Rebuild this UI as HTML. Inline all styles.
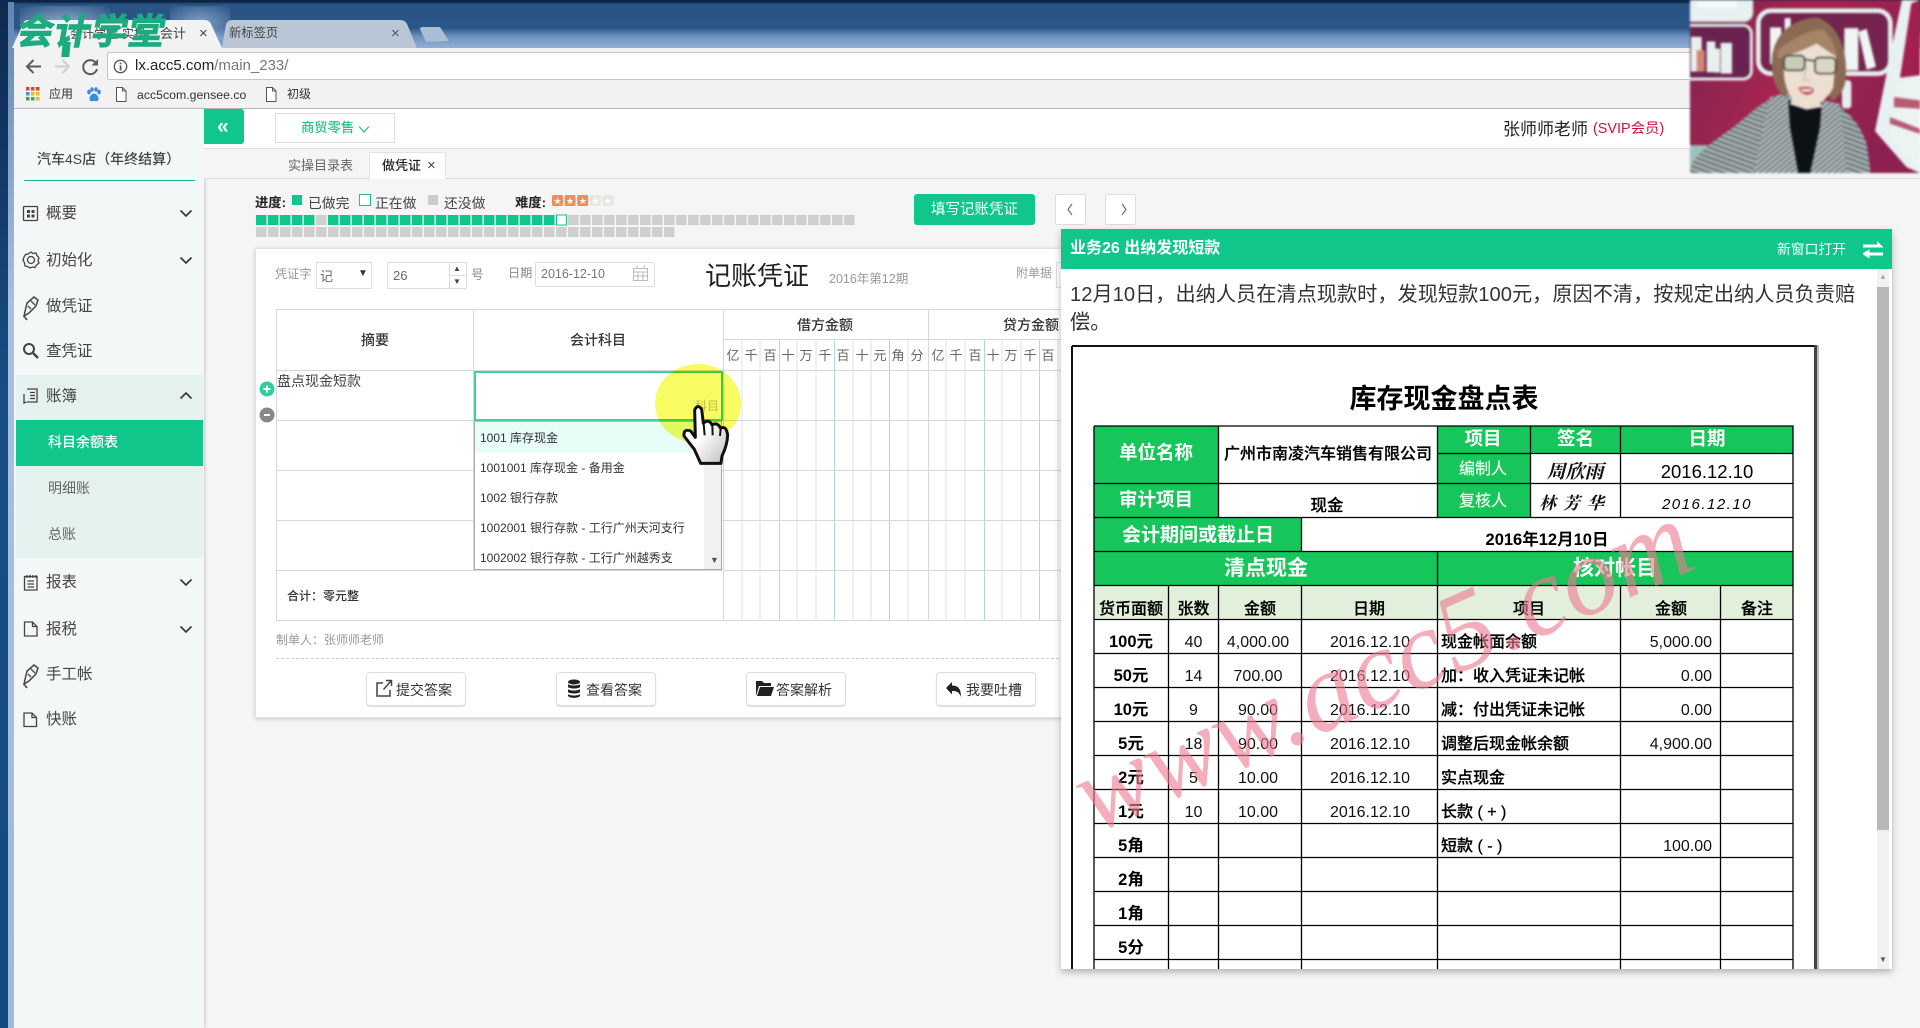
<!DOCTYPE html>
<html lang="zh"><head><meta charset="utf-8"><title>记账凭证</title>
<style>
html,body{margin:0;padding:0;width:1920px;height:1028px;overflow:hidden;background:#f5f5f5}
body{position:relative;font-family:"Liberation Sans","Noto Sans CJK SC",sans-serif;color:#333}
.a{position:absolute}
.t{position:absolute;white-space:nowrap;line-height:1}
.sq{position:absolute;width:10px;height:10px}
svg{position:absolute;overflow:visible}
.btn{position:absolute;top:672px;height:32px;width:98px;border:1px solid #ddd;border-radius:4px;background:#fff;box-shadow:0 1px 1px #ddd;font-size:14px;line-height:34px;text-align:right;color:#333}
.btn span{position:absolute;left:29px;top:0}
.dig{position:absolute;top:349px;font-size:13px;line-height:14px;color:#666;width:18px;text-align:center}
.itm{position:absolute;left:480px;font-size:12px;line-height:14px;color:#333;white-space:nowrap}
.nav{position:absolute;left:46px;font-size:15.5px;line-height:18px;color:#444;white-space:nowrap}
.sub{position:absolute;left:48px;font-size:14px;line-height:16px;color:#666;white-space:nowrap}
</style></head><body>

<!-- window chrome -->
<div class="a" style="left:0;top:0;width:1920px;height:48px;background:linear-gradient(#0c2547 0,#0c2547 2px,#2a5385 4px,#2c5688 28px,#6b90bd 36px,#8eaed6 47px)"></div>
<div class="a" style="left:0;top:0;width:8px;height:1028px;background:linear-gradient(#0f2a50,#1a4f86 40%,#15497f)"></div>
<div class="a" style="left:8px;top:2px;width:6px;height:1026px;background:linear-gradient(#5f86b5,#a5bfe2 30%,#9db9de)"></div>
<div class="a" style="left:20px;top:6px;width:90px;height:40px;background:radial-gradient(ellipse at center,#bcd0e4,rgba(188,208,228,0));opacity:.75"></div>
<div class="a" style="left:170px;top:6px;width:60px;height:35px;background:radial-gradient(ellipse at center,#a9c4df,rgba(169,196,223,0));opacity:.7"></div>

<!-- tabs -->
<svg style="left:0;top:0" width="460" height="50"><path d="M12 48 L24 22 Q25 20 28 20 L205 20 Q209 20 211 24 L222 48 Z" fill="#f2f2f2"/><path d="M222 48 L226 24 Q228 20 232 20 L400 20 Q405 20 407 24 L417 48 Z" fill="#b9c6d6"/><path d="M420 29 Q420 27 423 27 L440 27 L449 41 L426 42 Z" fill="#a9bdd5"/></svg>
<div class="t" style="left:160px;top:27px;font-size:13px;color:#444">会计</div>
<div class="t" style="left:70px;top:28px;font-size:12px;color:#444">会计学堂-实操</div>
<div class="t" style="left:199px;top:26px;font-size:15px;color:#444">×</div>
<div class="t" style="left:229px;top:27px;font-size:12.3px;color:#444">新标签页</div>
<div class="t" style="left:391px;top:26px;font-size:15px;color:#555">×</div>

<!-- toolbar -->
<div class="a" style="left:14px;top:48px;width:1906px;height:60px;background:#f2f2f2;border-bottom:1px solid #b5b5b5"></div>
<div class="a" style="left:107px;top:52px;width:1813px;height:26px;background:#fff;border:1px solid #c4c4c4;border-radius:2px 0 0 2px"></div>
<svg style="left:24px;top:56px" width="80" height="22" fill="none"><path d="M17 10.500H3M9.500 4L3 10.500 9.500 17" stroke="#5c5c5c" stroke-width="2"/><path d="M31 10.500H45M38.500 4L45 10.500 38.500 17" stroke="#cfcfcf" stroke-width="2"/><path d="M72.500 8A7 7 0 1 0 73 13" stroke="#5c5c5c" stroke-width="2"/><path d="M74 3V9.500H67.500Z" fill="#5c5c5c"/></svg>
<svg style="left:113px;top:59px" width="15" height="15"><circle cx="7.500" cy="7.500" r="6.200" fill="none" stroke="#555" stroke-width="1.300"/><rect x="6.700" y="6.500" width="1.700" height="5" fill="#555"/><rect x="6.700" y="3.600" width="1.700" height="1.700" fill="#555"/></svg>
<div class="t" style="left:135px;top:58px;font-size:15px;color:#222">lx.acc5.com<span style="color:#777">/main_233/</span></div>
<svg style="left:26px;top:87px" width="14" height="16"><g><rect x="0" y="0" width="3.500" height="3.500" fill="#d9413a"/><rect x="5" y="0" width="3.500" height="3.500" fill="#d9413a"/><rect x="10" y="0" width="3.500" height="3.500" fill="#d9413a"/><rect x="0" y="5" width="3.500" height="3.500" fill="#4a8fe0"/><rect x="5" y="5" width="3.500" height="3.500" fill="#e9b530"/><rect x="10" y="5" width="3.500" height="3.500" fill="#e9b530"/><rect x="0" y="10" width="3.500" height="3.500" fill="#43a55a"/><rect x="5" y="10" width="3.500" height="3.500" fill="#43a55a"/><rect x="10" y="10" width="3.500" height="3.500" fill="#e9b530"/></g></svg>
<div class="t" style="left:49px;top:88px;font-size:12px;color:#333">应用</div>
<svg style="left:86px;top:87px" width="15" height="16" fill="#3f88e5"><ellipse cx="3" cy="5" rx="1.800" ry="2.400"/><ellipse cx="6" cy="2.500" rx="1.700" ry="2.300"/><ellipse cx="10" cy="2.500" rx="1.700" ry="2.300"/><ellipse cx="13" cy="5" rx="1.800" ry="2.400"/><path d="M8 6.500C5.500 6.500 3 10 3.500 12.500 4 15 7 14 8 14S12 15 12.500 12.500C13 10 10.500 6.500 8 6.500Z"/></svg>
<svg style="left:116px;top:87px" width="11" height="16" fill="#fff" stroke="#555"><path d="M.5.500H6.500L10 4V14.500H.5Z"/><path d="M6.500.500V4H10" fill="none"/></svg>
<div class="t" style="left:137px;top:89px;font-size:12.300px;color:#333">acc5com.gensee.co</div>
<svg style="left:266px;top:87px" width="11" height="16" fill="#fff" stroke="#555"><path d="M.5.500H6.500L10 4V14.500H.5Z"/><path d="M6.500.500V4H10" fill="none"/></svg>
<div class="t" style="left:287px;top:88px;font-size:12px;color:#333">初级</div>

<!-- logo -->
<div class="t" style="left:18px;top:14px;font-size:36px;font-weight:700;color:#1cab80;transform:skewX(-10deg);-webkit-text-stroke:1px #1cab80;letter-spacing:1px">会计学堂</div>
<div class="a" style="left:62px;top:42px;width:8px;height:15px;background:#1cab80;transform:skewX(-6deg)"></div>

<!-- sidebar -->
<div class="a" style="left:14px;top:109px;width:190px;height:919px;background:#f3f7f8;box-shadow:1px 0 3px #c6c6c6"></div>
<div class="t" style="left:37px;top:152px;font-size:14px;font-weight:500;color:#444">汽车4S店（年终结算）</div>
<div class="a" style="left:24px;top:180px;width:171px;height:1px;background:#14b98a"></div>
<div class="a" style="left:16px;top:375px;width:187px;height:183px;background:#e4f1ef"></div>
<div class="a" style="left:16px;top:420px;width:187px;height:46px;background:#10c68a"></div>
<div class="nav" style="top:205px">概要</div>
<div class="nav" style="top:252px">初始化</div>
<div class="nav" style="top:298px">做凭证</div>
<div class="nav" style="top:343px">查凭证</div>
<div class="nav" style="top:388px">账簿</div>
<div class="sub" style="top:434px;color:#fff;font-weight:500">科目余额表</div>
<div class="sub" style="top:480px">明细账</div>
<div class="sub" style="top:526px">总账</div>
<div class="nav" style="top:574px">报表</div>
<div class="nav" style="top:621px">报税</div>
<div class="nav" style="top:666px">手工帐</div>
<div class="nav" style="top:711px">快账</div>
<svg style="left:0;top:0" width="204" height="760" fill="none" stroke="#444" stroke-width="1.300">
<rect x="23.500" y="206.500" width="14" height="14" rx="1"/><g fill="#444" stroke="none"><rect x="27" y="210" width="3" height="3"/><rect x="31.500" y="210" width="3" height="3"/><rect x="27" y="214.500" width="3" height="3"/><rect x="31.500" y="214.500" width="3" height="3"/></g>
<circle cx="31" cy="260" r="3.500"/><path d="M31 252L33 253.500 36 253 37 255.500 39 258 38 260.500 39 263 36.500 265 35 267.500 32.500 267 30 268 27.500 266.500 25 266 24.500 263 23 260 24 257 25.500 254.500 28 254Z"/>
<path d="M24 316L27 303 34 297 38 300 36 306 29 313ZM24 316L27 320" stroke-width="1.500"/><path d="M31 301L35 305M28 306L31 309"/>
<circle cx="29" cy="349" r="5" stroke-width="2"/><path d="M33 353L38 358" stroke-width="2.500"/>
<path d="M27 389H37V402H27M30 392.500H35M30 395.500H35M30 398.500H35M24 394V403L26.500 402"/>
<path d="M24.500 576.500H37V590H24.500ZM27 575V578M30 575V578M33 575V578M36 575V578M27.500 581H34M27.500 584H34M27.500 587H34"/>
<path d="M24.500 622H32.500L37 626.500V636H24.500Z"/><path d="M32.500 622V626.500H37"/>
<path d="M24 684L27 671 34 665 38 668 36 674 29 681ZM24 684L27 688" stroke-width="1.500"/><path d="M31 669L35 673M28 674L31 677"/>
<path d="M24 713H32L36.500 717.500V726.500H24Z"/><path d="M32 713V717.500H36.500"/>
<g stroke="#333" stroke-width="1.600"><path d="M180.500 210.500L186 216 191.500 210.500M180.500 257.500L186 263 191.500 257.500M180.500 579.500L186 585 191.500 579.500M180.500 626.500L186 632 191.500 626.500M180.500 398.500L186 393 191.500 398.500"/></g>
</svg>

<!-- top app bar -->
<div class="a" style="left:204px;top:109px;width:1716px;height:39px;background:#fff;border-bottom:1px solid #e0e0e0"></div>
<div class="a" style="left:204px;top:109px;width:40px;height:35px;background:#10c68a;border-radius:0 3px 3px 0"></div>
<div class="t" style="left:217px;top:116px;font-size:21px;font-weight:700;color:#fff">«</div>
<div class="a" style="left:275px;top:113px;width:118px;height:28px;border:1px solid #ddd;background:#fff"></div>
<div class="t" style="left:301px;top:121px;font-size:13.300px;color:#2cc08f;font-weight:500">商贸零售</div>
<svg style="left:358px;top:125px" width="12" height="9"><path d="M1 1.500L6 7 11 1.500" fill="none" stroke="#2cc08f" stroke-width="1.200"/></svg>
<div class="t" style="left:1503px;top:121px;font-size:17px;color:#222">张师师老师</div>
<div class="t" style="left:1593px;top:122px;font-size:14.400px;color:#d2113d">(SVIP会员)</div>

<!-- tabs -->
<div class="a" style="left:204px;top:149px;width:1716px;height:29px;background:#f5f5f5;border-bottom:1px solid #dcdcdc"></div>
<div class="a" style="left:369px;top:152px;width:77px;height:27px;background:#fff;border:1px solid #e4e4e4;border-bottom:0;box-sizing:border-box"></div>
<div class="t" style="left:288px;top:159px;font-size:13px;color:#666">实操目录表</div>
<div class="t" style="left:382px;top:159px;font-size:13px;font-weight:500;color:#222">做凭证</div>
<div class="t" style="left:427px;top:158px;font-size:15px;color:#444">×</div>

<!-- progress -->
<div class="t" style="left:255px;top:196px;font-size:13.300px;font-weight:700;color:#222">进度:</div>
<div class="a" style="left:292px;top:195px;width:10px;height:10px;background:#10c68a"></div>
<div class="t" style="left:308px;top:197px;font-size:13.800px;color:#444">已做完</div>
<div class="a" style="left:359px;top:194px;width:10px;height:10px;border:1px solid #10c68a;background:#fff"></div>
<div class="t" style="left:375px;top:197px;font-size:13.800px;color:#444">正在做</div>
<div class="a" style="left:428px;top:195px;width:10px;height:10px;background:#ccc"></div>
<div class="t" style="left:444px;top:197px;font-size:13.800px;color:#444">还没做</div>
<div class="t" style="left:515px;top:196px;font-size:13.300px;font-weight:700;color:#222">难度:</div>
<svg style="left:552px;top:195px" width="64" height="12"><g fill="#ea9060"><rect width="11" height="11" rx="1.500"/><rect x="12.600" width="11" height="11" rx="1.500"/><rect x="25.200" width="11" height="11" rx="1.500"/></g><g fill="#e6e6e2"><rect x="37.800" width="11" height="11" rx="1.500"/><rect x="50.400" width="11" height="11" rx="1.500"/></g><g fill="#fff" font-size="9" font-family="DejaVu Sans"><text x="1.500" y="9">★</text><text x="14" y="9">★</text><text x="26.700" y="9">★</text><text x="39.300" y="9">★</text><text x="51.900" y="9">★</text></g></svg>
<svg style="left:256px;top:215px" width="600" height="24">
<defs><pattern id="g" width="12" height="12" patternUnits="userSpaceOnUse"><rect width="10.500" height="10" fill="#10c68a"/></pattern><pattern id="c" width="12" height="12" patternUnits="userSpaceOnUse"><rect width="10.500" height="10" fill="#cfcfcf"/></pattern></defs>
<rect x="0" y="0" width="60" height="10" fill="url(#g)"/>
<rect x="60" y="0" width="12" height="10" fill="url(#c)"/>
<rect x="72" y="0" width="228" height="10" fill="url(#g)"/>
<rect x="300.500" y="0" width="10" height="10" fill="#fff" stroke="#10c68a" stroke-width="1"/>
<rect x="312" y="0" width="288" height="10" fill="url(#c)"/>
<g transform="translate(0,12)"><rect x="0" y="0" width="420" height="10" fill="url(#c)"/></g>
</svg>

<div class="a" style="left:914px;top:194px;width:121px;height:31px;background:#10c68a;border-radius:3px;color:#fff;font-size:14.500px;line-height:32px;text-align:center">填写记账凭证</div>
<div class="a" style="left:1055px;top:194px;width:29px;height:29px;background:#fff;border:1px solid #ddd;border-radius:2px"></div>
<div class="a" style="left:1105px;top:194px;width:29px;height:29px;background:#fff;border:1px solid #ddd;border-radius:2px"></div>
<svg style="left:1055px;top:194px" width="80" height="30" fill="none" stroke="#666" stroke-width="1.100"><path d="M17 10L13 15.500 17 21M67 10L71 15.500 67 21"/></svg>

<!-- voucher card -->
<div class="a" style="left:255px;top:248px;width:830px;height:470px;background:#fff;border:1px solid #e2e2e2;box-sizing:border-box;box-shadow:0 1px 4px #c8c8c8"></div>
<div class="t" style="left:275px;top:268px;font-size:12.200px;color:#999">凭证字</div>
<div class="a" style="left:316px;top:262px;width:54px;height:25px;border:1px solid #ddd;background:#fff"></div>
<div class="t" style="left:320px;top:270px;font-size:13px;color:#666">记</div>
<div class="t" style="left:358px;top:269px;font-size:10px;color:#333">▼</div>
<div class="a" style="left:387px;top:262px;width:78px;height:25px;border:1px solid #ddd;background:#fff"></div>
<div class="a" style="left:449px;top:262px;width:1px;height:26px;background:#ddd"></div>
<div class="a" style="left:449px;top:275px;width:17px;height:1px;background:#ddd"></div>
<div class="t" style="left:393px;top:269px;font-size:13px;color:#666">26</div>
<div class="t" style="left:453px;top:265px;font-size:8px;color:#444">▲</div>
<div class="t" style="left:453px;top:278px;font-size:8px;color:#444">▼</div>
<div class="t" style="left:471px;top:269px;font-size:12.500px;color:#888">号</div>
<div class="t" style="left:508px;top:267px;font-size:12.200px;color:#888">日期</div>
<div class="a" style="left:535px;top:262px;width:118px;height:23px;border:1px solid #ddd;border-radius:2px;background:#fff"></div>
<div class="t" style="left:541px;top:268px;font-size:12.500px;color:#777">2016-12-10</div>
<svg style="left:633px;top:265px" width="15" height="16" fill="none" stroke="#bbb"><path d="M.5 3.500H14.500V15.500H.5ZM.5 7H14.500M5 7V15.500M10 7V15.500M.5 11H14.500M4 .5V3M11 .5V3"/></svg>
<div class="t" style="left:705px;top:263px;font-size:26px;color:#222">记账凭证</div>
<div class="t" style="left:829px;top:273px;font-size:12.500px;color:#999">2016年第12期</div>
<div class="t" style="left:1016px;top:267px;font-size:12px;color:#999">附单据</div>
<div class="a" style="left:1056px;top:262px;width:20px;height:24px;border:1px solid #ddd"></div>

<svg style="left:0;top:0" width="1085" height="640" shape-rendering="crispEdges" fill="none">
<g stroke="#e2e2e2">
<path d="M742 339V620M760 339V620M797 339V620M816 339V620M853 339V620M871 339V620M908 339V620M946 339V620M965 339V620M1002 339V620M1021 339V620M1058 339V620"/>
</g>
<g stroke="#a9dbe6"><path d="M779.500 339V620M834.500 339V620M984.500 339V620M1039.500 339V620"/></g>
<path d="M889.500 339V620" stroke="#efb6bd"/>
<g stroke="#d8d8d8"><path d="M276.500 309V620M473.500 309V570M723.500 309V620M928.500 309V620M276 309.500H1085M723 339.500H1085M276 370.500H1085M276 420.500H1085M276 470.500H1085M276 520.500H1085M276 570.500H1085M276 620.500H1085"/></g>
<path d="M276 658.500H1060" stroke="#ccc" stroke-dasharray="3 2"/>
</svg>
<div class="t" style="left:361px;top:333px;font-size:14px;font-weight:500;color:#333">摘要</div>
<div class="t" style="left:570px;top:333px;font-size:14px;font-weight:500;color:#333">会计科目</div>
<div class="t" style="left:797px;top:318px;font-size:14px;font-weight:500;color:#333">借方金额</div>
<div class="t" style="left:1003px;top:318px;font-size:14px;font-weight:500;color:#333">贷方金额</div>
<div class="dig" style="left:724px">亿</div><div class="dig" style="left:742px">千</div><div class="dig" style="left:761px">百</div><div class="dig" style="left:779px">十</div><div class="dig" style="left:797px">万</div><div class="dig" style="left:816px">千</div><div class="dig" style="left:834px">百</div><div class="dig" style="left:853px">十</div><div class="dig" style="left:871px">元</div><div class="dig" style="left:889px">角</div><div class="dig" style="left:908px">分</div>
<div class="dig" style="left:929px">亿</div><div class="dig" style="left:947px">千</div><div class="dig" style="left:966px">百</div><div class="dig" style="left:984px">十</div><div class="dig" style="left:1002px">万</div><div class="dig" style="left:1021px">千</div><div class="dig" style="left:1039px">百</div>
<svg style="left:259px;top:381px" width="16" height="44"><circle cx="8" cy="8" r="7.500" fill="#2ecf9e"/><path d="M8 4.500V11.500M4.500 8H11.500" stroke="#fff" stroke-width="2"/><circle cx="8" cy="34" r="7.500" fill="#888"/><path d="M5 34H11" stroke="#fff" stroke-width="2"/></svg>
<div class="t" style="left:277px;top:374px;font-size:14px;color:#444">盘点现金短款</div>
<div class="a" style="left:474px;top:371px;width:245px;height:46px;border:2px solid #44cfa3;background:#fff"></div>
<div class="t" style="left:695px;top:400px;font-size:12px;color:#c5c5a0">科目</div>
<!-- dropdown -->
<div class="a" style="left:474px;top:421px;width:248px;height:149px;background:#fff;border:1px solid #aaa;border-top-color:#bbb;box-sizing:border-box;overflow:hidden"><div class="a" style="left:0;top:0;width:230px;height:31px;background:#e8fcf8"></div><div class="a" style="right:0;top:0;width:17px;height:148px;background:#f1f1f1"></div></div>
<div class="t" style="left:710px;top:556px;font-size:9px;color:#555">▼</div>
<div class="itm" style="top:431px">1001 库存现金</div>
<div class="itm" style="top:461px">1001001 库存现金 - 备用金</div>
<div class="itm" style="top:491px">1002 银行存款</div>
<div class="itm" style="top:521px">1002001 银行存款 - 工行广州天河支行</div>
<div class="itm" style="top:551px">1002002 银行存款 - 工行广州越秀支</div>
<div class="t" style="left:287px;top:590px;font-size:12px;font-weight:500;color:#333">合计：零元整</div>
<div class="t" style="left:276px;top:634px;font-size:12px;color:#999">制单人：张师师老师</div>
<div class="btn" style="left:366px"><span>提交答案</span></div>
<div class="btn" style="left:556px"><span>查看答案</span></div>
<div class="btn" style="left:746px"><span>答案解析</span></div>
<div class="btn" style="left:936px"><span>我要吐槽</span></div>
<svg style="left:0;top:0" width="1085" height="720" fill="none">
<path d="M383 683H377V696H390V690M383.500 689.500L391 681M386 680.500H391.500V686" stroke="#444" stroke-width="1.500"/>
<g fill="#222"><ellipse cx="574" cy="682" rx="6" ry="2.500"/><path d="M568 684C569 686 579 686 580 684V687C579 689 569 689 568 687ZM568 689C569 691 579 691 580 689V692C579 694 569 694 568 692ZM568 694C569 696 579 696 580 694V696C578 698.500 570 698.500 568 696Z"/></g>
<path d="M756 696V681H762L764 683H771V686H759L756 696ZM757 696L760 687H774L771 696Z" fill="#222"/>
<path d="M946 688L952 682V685.500C959 685.500 961 690 961 697 959 692 957 691 952 691V694.500Z" fill="#222"/>
</svg>

<!-- yellow highlight + hand -->
<div class="a" style="left:655px;top:364px;width:86px;height:79px;border-radius:50%;background:#f8fb62;mix-blend-mode:multiply"></div>
<svg style="left:660px;top:360px" width="100" height="110" viewBox="0 0 300 330"><defs><linearGradient id="h" x1="0" y1="0" x2="1" y2="1"><stop offset=".45" stop-color="#fff"/><stop offset="1" stop-color="#bbb"/></linearGradient></defs>
<path d="M104 150Q113 130 125 148L130 190Q146 175 156 195 172 185 182 205 198 195 203 225 202 255 186 288L183 310H122L103 268 72 228Q70 205 92 213L106 232Z" fill="url(#h)" stroke="#111" stroke-width="9" stroke-linejoin="round"/><path d="M131 192L134 226M157 196L158 226M182 206L180 228" stroke="#111" stroke-width="6"/></svg>

<!-- right task panel -->
<div class="a" style="left:1061px;top:229px;width:831px;height:740px;background:#fff;box-shadow:0 3px 7px rgba(0,0,0,.28);overflow:hidden">
<div class="a" style="left:0;top:0;width:831px;height:40px;background:#10c68a"></div>
<div class="t" style="left:9px;top:12px;font-size:16px;font-weight:700;color:#fff">业务26 出纳发现短款</div>
<div class="t" style="left:716px;top:14px;font-size:13.800px;color:#fff">新窗口打开</div>
<svg style="left:802px;top:13px" width="21" height="16" fill="#fff"><path d="M0 2.500H14V-1L20.500 5.500H0ZM20 10.500H6.500V7.500L0 11V12.500L6.500 16.500V13.500H20Z"/></svg>
<div class="t" style="left:9px;top:52px;font-size:20.200px;line-height:28px;color:#333;white-space:normal;width:800px">12月10日，出纳人员在清点现款时，发现短款100元，原因不清，按规定出纳人员负责赔偿。</div>
<div class="a" style="left:816px;top:40px;width:12px;height:700px;background:#f1f1f1"></div>
<div class="a" style="left:816px;top:58px;width:12px;height:543px;background:#b8b8b8"></div>
<div class="t" style="left:818px;top:44px;font-size:8px;color:#aaa">▲</div>
<div class="t" style="left:818px;top:727px;font-size:8px;color:#555">▼</div>

<svg style="left:0;top:40px" width="831" height="700" font-family="&quot;Liberation Sans&quot;,&quot;Noto Sans CJK SC&quot;,sans-serif" text-anchor="middle">
<g transform="translate(-1061,-269)">
<rect x="1071" y="345" width="743" height="640" fill="#fff"/>
<path d="M1072 346H1814M1072 346V975" stroke="#111" stroke-width="2" fill="none"/>
<rect x="1814" y="345" width="3" height="640" fill="#444"/>
<rect x="1817" y="345" width="2" height="640" fill="#bbb"/>
<text x="1444" y="408" font-size="27" font-weight="700" fill="#000">库存现金盘点表</text>
<!-- fills -->
<g fill="#16c65a">
<rect x="1094" y="426" width="125" height="92" /><rect x="1094" y="518" width="208" height="33"/><rect x="1094" y="551" width="699" height="34"/>
<rect x="1437" y="426" width="93" height="28"/><rect x="1437" y="483" width="93" height="34"/>
<rect x="1437" y="454" width="93" height="29"/>
<rect x="1530" y="426" width="263" height="27"/>
</g>
<rect x="1094" y="585" width="699" height="34" fill="#e2efda"/>
<!-- lines -->
<g stroke="#000" stroke-width="1.300" fill="none">
<path d="M1094 426H1793V969M1094 426V969"/>
<path d="M1437 453.500H1793M1094 483.500H1793M1094 517.500H1793M1094 551.500H1793M1094 585.500H1793M1094 619.500H1793M1094 653.500H1793M1094 687.500H1793M1094 721.500H1793M1094 755.500H1793M1094 789.500H1793M1094 823.500H1793M1094 857.500H1793M1094 891.500H1793M1094 925.500H1793M1094 959.500H1793"/>
<path d="M1218.500 426V517M1301.500 517V551M1437.500 426V517M1530.500 426V517M1620.500 426V517"/>
<path d="M1168.500 585V969M1218.500 585V969M1301.500 585V969M1437.500 551V969M1620.500 585V969M1720.500 585V969"/>
</g>
<!-- header text -->
<g fill="#fff" font-weight="700" font-size="18.500">
<text x="1156" y="459">单位名称</text><text x="1156" y="506">审计项目</text>
<text x="1483" y="445">项目</text><text x="1575.500" y="445">签名</text><text x="1707" y="445">日期</text>
<text x="1198" y="541" font-size="19">会计期间或截止日</text>
<text x="1266" y="575" font-size="21">清点现金</text><text x="1615" y="575" font-size="21">核对帐目</text>
</g>
<g fill="#f0fff0" font-size="16" stroke="#f0fff0" stroke-width=".2"><text x="1483" y="474">编制人</text><text x="1483" y="506">复核人</text></g>
<text x="1328" y="459" font-size="16" font-weight="500" textLength="208" lengthAdjust="spacingAndGlyphs" fill="#000" stroke="#000" stroke-width=".25">广州市南凌汽车销售有限公司</text>
<text x="1327" y="511" font-size="16.500" font-weight="500" fill="#000" stroke="#000" stroke-width=".25">现金</text>
<text x="1547" y="545" font-size="16.500" font-weight="700" fill="#000">2016年12月10日</text>
<text x="1575" y="478" font-size="19" font-style="italic" font-family="&quot;Noto Serif CJK SC&quot;,serif" font-weight="700" fill="#111">周欣雨</text>
<text x="1575" y="509" font-size="17" font-style="italic" font-family="&quot;Noto Serif CJK SC&quot;,serif" font-weight="700" fill="#111" letter-spacing="7">林芳华</text>
<text x="1707" y="478" font-size="18.500" fill="#000">2016.12.10</text>
<text x="1707" y="509" font-size="15" font-style="italic" fill="#000" letter-spacing="1.500">2016.12.10</text>
<!-- sub header -->
<g font-size="16" font-weight="500" fill="#000" stroke="#000" stroke-width=".25"><text x="1131" y="614" textLength="64" lengthAdjust="spacingAndGlyphs">货币面额</text><text x="1193.500" y="614">张数</text><text x="1260" y="614">金额</text><text x="1369" y="614">日期</text><text x="1529" y="614">项目</text><text x="1671" y="614">金额</text><text x="1757" y="614">备注</text></g>
<!-- rows -->
<g font-size="16.500" font-weight="700" fill="#000"><text x="1131" y="647">100元</text><text x="1131" y="681">50元</text><text x="1131" y="715">10元</text><text x="1131" y="749">5元</text><text x="1131" y="783">2元</text><text x="1131" y="817">1元</text><text x="1131" y="851">5角</text><text x="1131" y="885">2角</text><text x="1131" y="919">1角</text><text x="1131" y="953">5分</text></g>
<g font-size="16" fill="#111"><text x="1193.500" y="647">40</text><text x="1193.500" y="681">14</text><text x="1193.500" y="715">9</text><text x="1193.500" y="749">18</text><text x="1193.500" y="783">5</text><text x="1193.500" y="817">10</text>
<text x="1258" y="647">4,000.00</text><text x="1258" y="681">700.00</text><text x="1258" y="715">90.00</text><text x="1258" y="749">90.00</text><text x="1258" y="783">10.00</text><text x="1258" y="817">10.00</text>
<text x="1370" y="647">2016.12.10</text><text x="1370" y="681">2016.12.10</text><text x="1370" y="715">2016.12.10</text><text x="1370" y="749">2016.12.10</text><text x="1370" y="783">2016.12.10</text><text x="1370" y="817">2016.12.10</text>
<g text-anchor="end"><text x="1712" y="647">5,000.00</text><text x="1712" y="681">0.00</text><text x="1712" y="715">0.00</text><text x="1712" y="749">4,900.00</text><text x="1712" y="851">100.00</text></g></g>
<g font-size="16" font-weight="500" fill="#000" text-anchor="start" stroke="#000" stroke-width=".25"><text x="1441" y="647">现金帐面余额</text><text x="1441" y="681">加：收入凭证未记帐</text><text x="1441" y="715">减：付出凭证未记帐</text><text x="1441" y="749">调整后现金帐余额</text><text x="1441" y="783">实点现金</text><text x="1441" y="817">长款 ( + )</text><text x="1441" y="851">短款 ( - )</text></g>
<!-- watermark -->
<text transform="translate(1094,834) rotate(-23.800)" x="0" y="0" text-anchor="start" font-family="&quot;Liberation Serif&quot;,serif" font-style="italic" font-size="112" fill="#ec7a92" fill-opacity=".62" textLength="662" lengthAdjust="spacingAndGlyphs">www.acc5.com</text>
</g></svg>
</div>

<!-- webcam video -->
<svg style="left:1690px;top:0;filter:blur(1px)" width="230" height="173" viewBox="0 0 690 517" preserveAspectRatio="none">
<defs>
<linearGradient id="bg" x1="0" y1="0" x2="1" y2=".4"><stop offset="0" stop-color="#7a2550"/><stop offset=".5" stop-color="#a62550"/><stop offset="1" stop-color="#8c2050"/></linearGradient>
<pattern id="st" width="14" height="14" patternUnits="userSpaceOnUse" patternTransform="rotate(20)"><rect width="14" height="14" fill="#aab4b2"/><rect width="14" height="5" fill="#58646a"/></pattern>
<pattern id="st2" width="12" height="12" patternUnits="userSpaceOnUse" patternTransform="rotate(-40)"><rect width="12" height="12" fill="#b4bcba"/><rect width="12" height="4" fill="#5c686a"/></pattern>
<clipPath id="vc"><rect width="690" height="517"/></clipPath>
</defs>
<g clip-path="url(#vc)">
<rect width="690" height="517" fill="url(#bg)"/>
<rect x="-20" y="-40" width="208" height="104" rx="26" fill="#e8f0f0" stroke="#c6d4d4" stroke-width="4"/>
<rect x="20" y="-10" width="120" height="32" fill="#f4fafa"/>
<rect x="-30" y="76" width="214" height="160" rx="24" fill="#6a2350" stroke="#dfeaea" stroke-width="9"/>
<g fill="#e8f0ee"><rect x="3" y="110" width="32" height="104"/><rect x="50" y="124" width="26" height="92"/><rect x="72" y="145" width="18" height="72"/><rect x="92" y="128" width="34" height="92"/></g>
<rect x="20" y="150" width="24" height="64" fill="#d28672"/>
<rect x="205" y="32" width="396" height="188" rx="38" fill="#74244f" stroke="#e6efef" stroke-width="14"/>
<g fill="#eef5f3"><rect x="240" y="82" width="34" height="110"/><rect x="284" y="54" width="18" height="50"/><rect x="463" y="84" width="42" height="126"/><path d="M505 95L530 86 558 200 530 208Z"/></g>
<rect x="456" y="240" width="28" height="84" rx="10" fill="#e6efef"/>
<path d="M636 0L690 0 690 517 650 500 555 392 610 120Z" fill="#e8f1f1"/>
<path d="M664 10L690 0V225L630 232Z" fill="#a02050"/>
<path d="M622 250L690 228V517L600 410Z" fill="#ecf4f2"/>
<path d="M612 290L690 300V325L612 320ZM600 350L690 385V400L600 370Z" fill="#b85a70"/>
<rect x="0" y="434" width="180" height="83" fill="#9cc0bc"/>
<path d="M0 517C0 470 60 430 130 380 180 340 230 290 290 276L400 296C470 320 510 370 530 430L542 517Z" fill="url(#st)"/>
<path d="M190 517L240 290 300 280 330 517Z" fill="url(#st2)"/>
<path d="M360 517L400 300 450 310 470 517Z" fill="url(#st2)"/>
<path d="M295 300L395 305 390 380 360 517H325L300 380Z" fill="#0c1116"/>
<path d="M310 270H385L395 320 350 328 300 312Z" fill="#e6dcd0"/>
<path d="M246 200C240 130 280 60 380 52 440 70 470 140 468 215 470 270 440 300 425 300L385 240 300 240 290 290C260 280 248 240 246 200Z" fill="#8a6a52"/>
<path d="M282 170C300 170 345 130 370 110 395 130 425 150 438 170L430 260C415 300 370 322 345 322 310 310 290 280 282 230Z" fill="#ecdfd2"/>
<path d="M262 150C290 130 340 90 400 88 430 120 440 150 440 170L380 130C340 150 290 170 262 175Z" fill="#a58468"/>
<g fill="none" stroke="#3a3a30" stroke-width="4"><rect x="282" y="166" width="62" height="44" rx="12" fill="#a9bd9f" fill-opacity=".55"/><rect x="375" y="172" width="62" height="48" rx="12" fill="#c4cdb8" fill-opacity=".45"/><path d="M344 178L375 182"/></g>
<path d="M325 262C340 258 360 258 372 266 370 288 335 292 325 262Z" fill="#c05a5e"/><path d="M330 266H368L360 274H338Z" fill="#f4e8e4"/>
<path d="M350 200L340 240H362" fill="none" stroke="#cbb7a8" stroke-width="3"/>
</g></svg>

</body></html>
